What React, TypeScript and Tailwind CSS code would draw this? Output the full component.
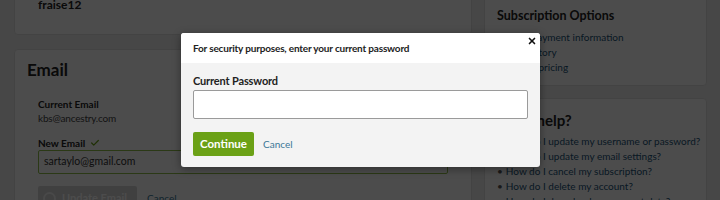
import { Check, X } from "lucide-react";

const font = { fontFamily: "Lato, 'Liberation Sans', sans-serif" };

function Card({ className, children }: { className?: string; children: React.ReactNode }) {
  return (
    <div className={`rounded-[4px] border border-[#e2e2e2] bg-white ${className ?? ""}`}>
      {children}
    </div>
  );
}

const helpLinks = [
  "How do I update my username or password?",
  "How do I update my email settings?",
  "How do I cancel my subscription?",
  "How do I delete my account?",
  "How do I download my account data?",
];

export default function App() {
  return (
    <div className="relative h-[200px] w-[720px] overflow-hidden bg-[#eeeeee] text-[#333]" style={font}>
      {/* page behind the modal */}
      <div className="-mt-[30px] flex gap-[12px] pl-[14px] pr-[13px]">
        <div className="flex w-[458px] flex-col gap-[14px]">
          <Card className="h-[65px] px-[23px] pt-[27px]">
            <div className="text-[12px] font-bold leading-[14px] text-[#222]">fraise12</div>
          </Card>
          <Card className="h-[200px] px-[12px] pt-[10px]">
            <h2 className="text-[17px] font-bold leading-[20px] text-[#222]">Email</h2>
            <div className="mt-[17px] pl-[11px]">
              <div className="text-[10px] font-bold leading-[14px] text-[#222]">Current Email</div>
              <div className="text-[10px] leading-[14px] tracking-[-0.2px] text-[#444]">kbs@ancestry.com</div>
              <div className="mt-[11px] flex items-center gap-[5px] text-[10px] font-bold leading-[14px] text-[#222]">
                New Email <Check size={10} strokeWidth={3} className="text-[#6ba116]" />
              </div>
              <div className="flex h-[24px] w-[410px] items-center rounded-[2px] border border-[#8fbf4a] px-[5px] text-[10.5px] text-[#333]">
                sartaylo@gmail.com
              </div>
              <div className="mt-[12px] flex items-center gap-[10px]">
                <div className="flex h-[24px] w-[99px] items-center gap-[6px] rounded-[2px] bg-[#d6d6d6] px-[5px] text-[11px] font-bold text-white">
                  <span className="h-[13px] w-[13px] rounded-full border-2 border-white/70" />
                  Update Email
                </div>
                <span className="text-[10px] text-[#3b7797]">Cancel</span>
              </div>
            </div>
          </Card>
        </div>

        <div className="flex w-[223px] flex-col gap-[12px]">
          <Card className="h-[116px] px-[12px] pt-[37px]">
            <h3 className="text-[12.5px] font-bold leading-[16px] text-[#222]">Subscription Options</h3>
            <div className="mt-[6px] flex flex-col text-[10px] leading-[15px] text-[#1d5478]">
              <span>Update payment information</span>
              <span>Billing history</span>
              <span>Standard pricing</span>
            </div>
          </Card>
          <Card className="h-[140px] px-[12px] pt-[12px]">
            <h3 className="text-[15px] font-bold leading-[18px] text-[#222]">Need help?</h3>
            <ul className="mt-[5px] flex flex-col text-[10px] leading-[15px] text-[#1d5478]">
              {helpLinks.map((t) => (
                <li key={t} className="flex gap-[3px] whitespace-nowrap">
                  <span className="text-[#555]">•</span>
                  {t}
                </li>
              ))}
            </ul>
          </Card>
        </div>
      </div>

      {/* overlay */}
      <div className="absolute inset-0 bg-black/70" />

      {/* modal */}
      <div className="absolute left-[181px] top-[33px] w-[359px] overflow-hidden rounded-[3px] bg-[#f3f3f3] shadow-[0_2px_8px_rgba(0,0,0,0.4)]">
        <div className="relative flex h-[30px] items-center bg-white px-[12px] pt-[1px]">
          <span className="text-[10px] font-bold tracking-[-0.18px] text-[#222]">
            For security purposes, enter your current password
          </span>
          <X
            aria-label="Close"
            size={10}
            strokeWidth={4}
            className="absolute right-[3px] top-[3px] text-[#111]"
          />
        </div>
        <div className="px-[12px] pb-[11px] pt-[10px]">
          <label className="block text-[11px] font-bold leading-[16px] tracking-[-0.15px] text-[#222]">
            Current Password
          </label>
          <input
            type="password"
            className="mt-[1px] block h-[29px] w-[335px] rounded-[2px] border border-[#9a9a9a] bg-white outline-none"
          />
          <div className="mt-[13px] flex items-center gap-[9px]">
            <button className="h-[24px] w-[61px] rounded-[2px] bg-[#6ba116] text-[11.5px] font-bold text-white">
              Continue
            </button>
            <span className="text-[10px] text-[#3b7797]">Cancel</span>
          </div>
        </div>
      </div>
    </div>
  );
}
